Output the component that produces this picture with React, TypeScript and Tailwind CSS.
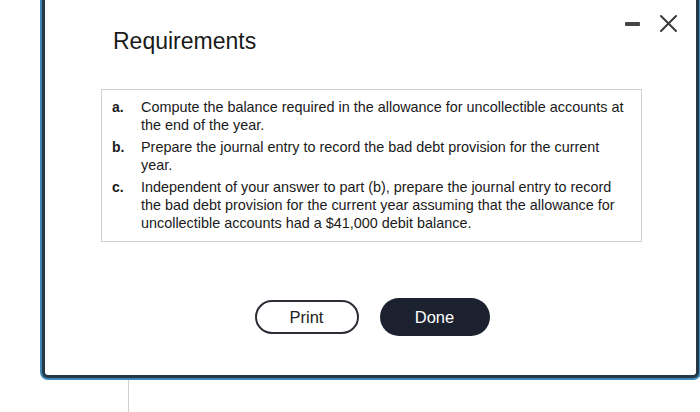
import type { ReactNode } from "react";

const items: { label: string; text: string }[] = [
  { label: "a.", text: "Compute the balance required in the allowance for uncollectible accounts at the end of the year." },
  { label: "b.", text: "Prepare the journal entry to record the bad debt provision for the current year." },
  {
    label: "c.",
    text: "Independent of your answer to part (b), prepare the journal entry to record the bad debt provision for the current year assuming that the allowance for uncollectible accounts had a $41,000 debit balance."
  }
];

function PillButton({ children, dark }: { children: ReactNode; dark?: boolean }) {
  return dark ? (
    <button type="button" className="flex h-[38px] w-[110px] items-center justify-center rounded-full bg-[#1c2130] text-[16.5px] text-white">
      {children}
    </button>
  ) : (
    <button type="button" className="flex h-[34px] w-[104px] items-center justify-center rounded-full border-2 border-[#2a2d33] bg-white text-[16.5px] text-[#222]">
      {children}
    </button>
  );
}

export default function App() {
  return (
    <div className="h-[412px] w-[700px] overflow-hidden bg-white font-['Liberation_Sans',Arial,sans-serif]">
      <div className="ml-[42px] h-[378px] w-[657px] rounded-b-[6px] border-x-[3px] border-b-[3px] border-[#263746] bg-white shadow-[0_0_0_2px_#3e86b6]">
        <div className="flex items-start justify-between pl-[68px] pr-[18px] pt-[27px]">
          <h1 className="text-[23px] leading-[28px] text-[#1a1a1a]">Requirements</h1>
          <div className="-mt-[13px] flex items-center gap-[19px]">
            <span className="mt-[1px] h-[4px] w-[15px] rounded-[1px] bg-[#444]" />
            <svg width="19" height="19" viewBox="0 0 19 19" className="text-[#3a3a3a]">
              <path d="M2 2 L17 17 M17 2 L2 17" stroke="currentColor" strokeWidth="2" strokeLinecap="round" />
            </svg>
          </div>
        </div>

        <div className="ml-[56px] mt-[34px] w-[541px] border border-[#cfcfcf] px-[10px] pb-[9px] pt-[8px]">
          <ul className="flex flex-col gap-[4px]">
            {items.map((item) => (
              <li key={item.label} className="flex text-[14.4px] leading-[18px] text-[#1a1a1a]">
                <span className="w-[29px] shrink-0 text-[14px] font-bold">{item.label}</span>
                <span className="pr-[4px]">{item.text}</span>
              </li>
            ))}
          </ul>
        </div>

        <div className="mt-[56px] flex items-center justify-center gap-[21px] pl-[3px]">
          <PillButton>Print</PillButton>
          <PillButton dark>Done</PillButton>
        </div>
      </div>
      <div className="ml-[128px] mt-[2px] h-[34px] w-px bg-[#d0d0d0]" />
    </div>
  );
}
